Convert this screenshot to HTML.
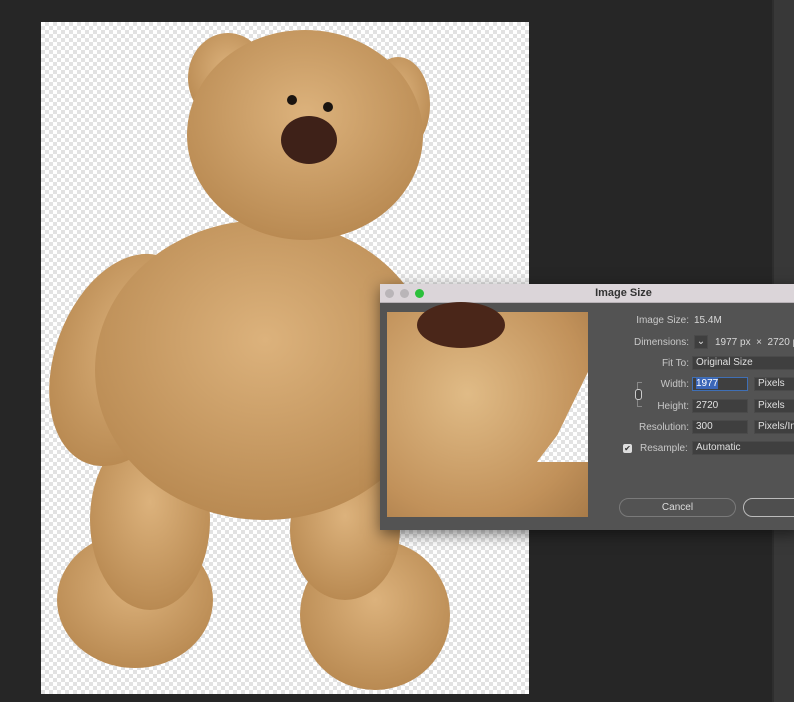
<!DOCTYPE html>
<html><head><meta charset="utf-8"><style>
*{margin:0;padding:0;box-sizing:border-box}
body{width:794px;height:702px;background:#262626;position:relative;overflow:hidden;font-family:"Liberation Sans",sans-serif}
.chk{background-color:#fff;background-image:linear-gradient(45deg,#e2e2e2 25%,transparent 25%,transparent 75%,#e2e2e2 75%),linear-gradient(45deg,#e2e2e2 25%,transparent 25%,transparent 75%,#e2e2e2 75%);background-size:8px 8px;background-position:0 0,4px 4px}
.abs{position:absolute}
.lbl{position:absolute;font-size:10px;color:#c8c8c8;text-align:right;width:100px;white-space:nowrap}
.fld{position:absolute;height:14px;background:#3f3f3f;border:1px solid #4a4a4a;color:#e0e0e0;font-size:10px;line-height:12px;padding-left:3px;white-space:nowrap;overflow:hidden}
.dlg .v{position:absolute;font-size:10px;color:#d8d8d8;white-space:nowrap}
</style></head><body>
<div class="abs chk" style="left:41px;top:22px;width:488px;height:672px"></div>
<svg class="abs" style="left:0;top:0" width="794" height="702">
<defs><radialGradient id="g" cx="50%" cy="40%" r="60%"><stop offset="0" stop-color="#dcb27c"/><stop offset="1" stop-color="#b98a52"/></radialGradient></defs>
<g fill="url(#g)">
<ellipse cx="135" cy="600" rx="78" ry="68"/>
<ellipse cx="150" cy="520" rx="60" ry="90"/>
<ellipse cx="375" cy="615" rx="75" ry="75"/>
<ellipse cx="345" cy="530" rx="55" ry="70"/>
<ellipse cx="125" cy="360" rx="70" ry="110" transform="rotate(20 125 360)"/>
<ellipse cx="265" cy="370" rx="170" ry="150"/>
<ellipse cx="228" cy="78" rx="40" ry="45"/>
<ellipse cx="398" cy="105" rx="32" ry="48"/>
<ellipse cx="305" cy="135" rx="118" ry="105"/>
</g>
<ellipse cx="309" cy="140" rx="28" ry="24" fill="#3e2118"/>
<circle cx="292" cy="100" r="5" fill="#1a1410"/><circle cx="328" cy="107" r="5" fill="#1a1410"/>
</svg>
<div class="abs" style="left:772px;top:0;width:22px;height:702px;background:#383838;border-left:2px solid #2e2e2e"></div>
<div class="abs" style="left:380px;top:284px;width:420px;height:246px;background:#535353;box-shadow:0 4px 14px rgba(0,0,0,.5)">
 <div class="abs" style="left:0;top:0;width:420px;height:19px;background:#dbd5d9;border-bottom:1px solid #b8b2b6"></div>
 <div class="abs" style="left:5px;top:5px;width:9px;height:9px;border-radius:50%;background:#b9b5b8"></div>
 <div class="abs" style="left:20px;top:5px;width:9px;height:9px;border-radius:50%;background:#b9b5b8"></div>
 <div class="abs" style="left:35px;top:5px;width:9px;height:9px;border-radius:50%;background:#2bc03b"></div>
 <div class="abs" style="left:0;top:3px;width:487px;text-align:center;font-size:11px;font-weight:bold;color:#333">Image Size</div>
 <div class="abs" style="left:7px;top:28px;width:201px;height:205px;background:radial-gradient(ellipse at 40% 40%,#e0bb86,#c1915a 70%,#a87b49)">
  <div class="abs" style="left:30px;top:-10px;width:88px;height:46px;border-radius:50%;background:#4a2619"></div>
  <div class="abs chk" style="left:150px;top:60px;width:51px;height:90px;clip-path:polygon(100% 0,40% 70%,0 100%,100% 100%)"></div>
 </div>
</div>
<div class="dlg">
 <div class="lbl" style="left:589px;top:315px">Image Size:</div><div class="v" style="left:694px;top:315px">15.4M</div>
 <div class="lbl" style="left:589px;top:337px">Dimensions:</div>
 <div class="fld" style="left:694px;top:335px;width:14px;padding:0;text-align:center">⌄</div>
 <div class="v" style="left:715px;top:337px">1977 px&nbsp; ×&nbsp; 2720 px</div>
 <div class="lbl" style="left:589px;top:358px">Fit To:</div><div class="fld" style="left:692px;top:356px;width:110px">Original Size</div>
 <div class="lbl" style="left:589px;top:379px">Width:</div>
 <div class="fld" style="left:692px;top:377px;width:56px;border-color:#3f6fb5"><span style="background:#3b66b8;color:#fff">1977</span></div>
 <div class="fld" style="left:754px;top:377px;width:50px">Pixels</div>
 <div class="lbl" style="left:589px;top:401px">Height:</div><div class="fld" style="left:692px;top:399px;width:56px">2720</div>
 <div class="fld" style="left:754px;top:399px;width:50px">Pixels</div>
 <div class="lbl" style="left:589px;top:422px">Resolution:</div><div class="fld" style="left:692px;top:420px;width:56px">300</div>
 <div class="fld" style="left:754px;top:420px;width:50px">Pixels/In</div>
 <div class="abs" style="left:623px;top:444px;width:9px;height:9px;background:#ddd;border-radius:2px;font-size:8px;line-height:9px;text-align:center;color:#333">✔</div>
 <div class="v" style="left:640px;top:443px;color:#c8c8c8">Resample:</div>
 <div class="fld" style="left:692px;top:441px;width:110px">Automatic</div>
 <div class="abs" style="left:637px;top:382px;width:5px;height:25px;border:1px solid #888;border-right:none"></div>
 <div class="abs" style="left:635px;top:389px;width:7px;height:11px;border:1px solid #ccc;border-radius:3px;background:#444"></div>
 <div class="abs" style="left:619px;top:498px;width:117px;height:19px;border:1px solid #7a7a7a;border-radius:10px;color:#ddd;font-size:10px;text-align:center;line-height:17px">Cancel</div>
 <div class="abs" style="left:743px;top:498px;width:80px;height:19px;border:1px solid #bbb;border-radius:10px;background:#4e4e4e"></div>
</div>
</body></html>
